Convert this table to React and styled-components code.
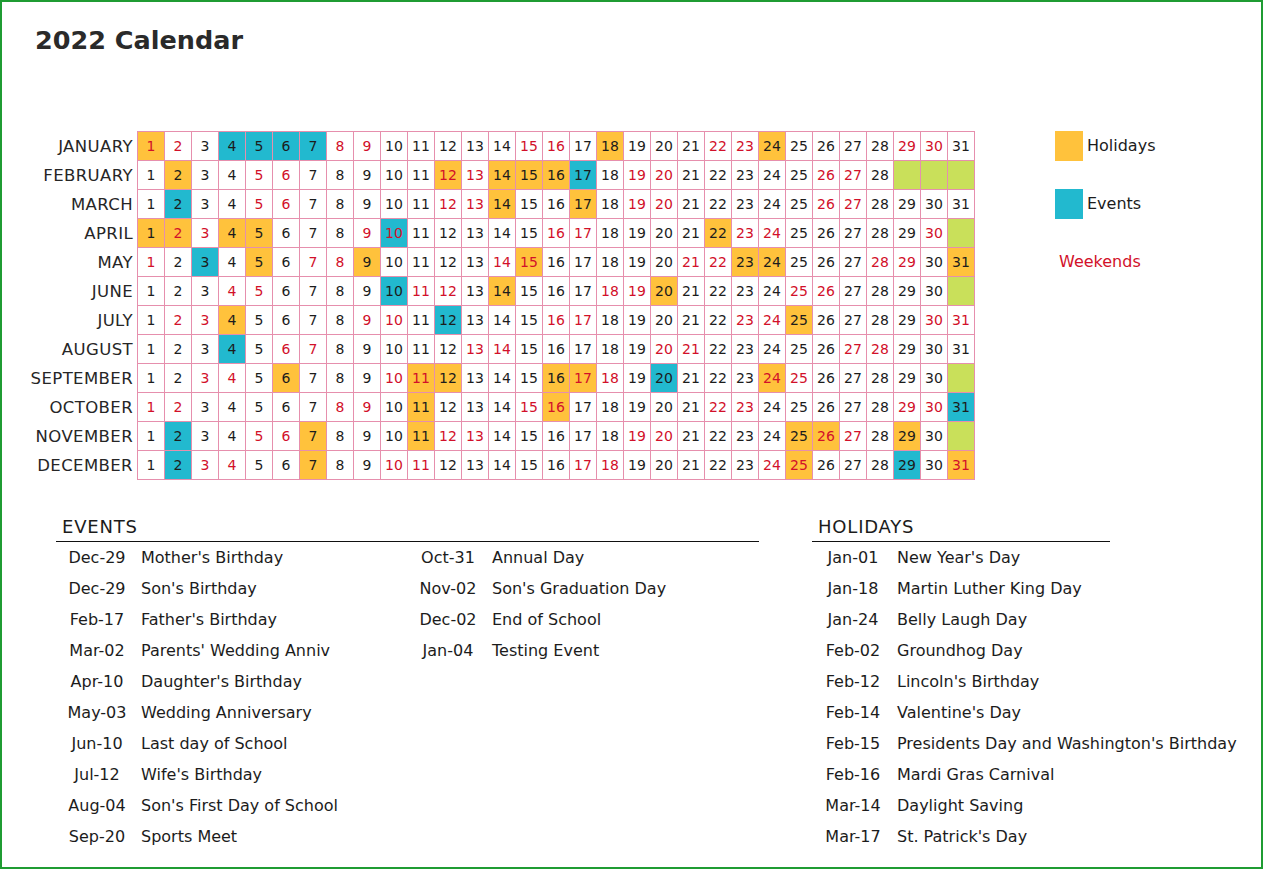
import styled, { createGlobalStyle } from "styled-components";

const GlobalStyle = createGlobalStyle`
  html, body {
    margin: 0;
    padding: 0;
    background: #ffffff;
    overflow: hidden;
  }
  body {
    font-family: "DejaVu Sans", "Liberation Sans", sans-serif;
    color: #1c1c1c;
  }
`;

const YEAR = 2022;

const MONTHS = [
  "JANUARY",
  "FEBRUARY",
  "MARCH",
  "APRIL",
  "MAY",
  "JUNE",
  "JULY",
  "AUGUST",
  "SEPTEMBER",
  "OCTOBER",
  "NOVEMBER",
  "DECEMBER",
];

const HOLIDAY_DAYS = [
  [1, 18, 24],
  [2, 12, 14, 15, 16],
  [14, 17],
  [1, 2, 4, 5, 22],
  [5, 9, 15, 23, 24, 31],
  [14, 20],
  [4, 25],
  [],
  [6, 11, 12, 16, 17, 24],
  [11, 16],
  [7, 11, 25, 26, 29],
  [7, 25, 31],
];

const EVENT_DAYS = [
  [4, 5, 6, 7],
  [17],
  [2],
  [10],
  [3],
  [10],
  [12],
  [4],
  [20],
  [31],
  [2],
  [2, 29],
];

const EVENTS_LEFT = [
  ["Dec-29", "Mother's Birthday"],
  ["Dec-29", "Son's Birthday"],
  ["Feb-17", "Father's Birthday"],
  ["Mar-02", "Parents' Wedding Anniv"],
  ["Apr-10", "Daughter's Birthday"],
  ["May-03", "Wedding Anniversary"],
  ["Jun-10", "Last day of School"],
  ["Jul-12", "Wife's Birthday"],
  ["Aug-04", "Son's First Day of School"],
  ["Sep-20", "Sports Meet"],
];

const EVENTS_RIGHT = [
  ["Oct-31", "Annual Day"],
  ["Nov-02", "Son's Graduation Day"],
  ["Dec-02", "End of School"],
  ["Jan-04", "Testing Event"],
];

const HOLIDAYS = [
  ["Jan-01", "New Year's Day"],
  ["Jan-18", "Martin Luther King Day"],
  ["Jan-24", "Belly Laugh Day"],
  ["Feb-02", "Groundhog Day"],
  ["Feb-12", "Lincoln's Birthday"],
  ["Feb-14", "Valentine's Day"],
  ["Feb-15", "Presidents Day and Washington's Birthday"],
  ["Feb-16", "Mardi Gras Carnival"],
  ["Mar-14", "Daylight Saving"],
  ["Mar-17", "St. Patrick's Day"],
];

const FILLS = {
  holiday: "#ffc23c",
  event: "#22b9cf",
  blank: "#c9e05a",
  none: "#ffffff",
};

function cellInfo(month, day) {
  const daysInMonth = new Date(YEAR, month + 1, 0).getDate();
  if (day > daysInMonth) return { fill: "blank", label: "", weekend: false };
  const weekday = new Date(YEAR, month, day).getDay();
  let fill = "none";
  if (HOLIDAY_DAYS[month].includes(day)) fill = "holiday";
  if (EVENT_DAYS[month].includes(day)) fill = "event";
  return { fill, label: day, weekend: weekday === 0 || weekday === 6 };
}

export default function App() {
  const days = Array.from({ length: 31 }, (_, i) => i + 1);

  return (
    <Frame>
      <GlobalStyle />
      <Title>2022 Calendar</Title>

      <CalendarRow>
        <MonthLabels>
          {MONTHS.map((name) => (
            <MonthLabel key={name}>{name}</MonthLabel>
          ))}
        </MonthLabels>

        <DayGrid>
          {MONTHS.map((name, m) =>
            days.map((d) => {
              const info = cellInfo(m, d);
              return (
                <DayCell
                  key={`${name}-${d}`}
                  $fill={FILLS[info.fill]}
                  $weekend={info.weekend}
                >
                  {info.label}
                </DayCell>
              );
            })
          )}
        </DayGrid>

        <Legend>
          <LegendItem>
            <Swatch $color={FILLS.holiday} />
            <span>Holidays</span>
          </LegendItem>
          <LegendItem>
            <Swatch $color={FILLS.event} />
            <span>Events</span>
          </LegendItem>
          <LegendItem>
            <WeekendNote>Weekends</WeekendNote>
          </LegendItem>
        </Legend>
      </CalendarRow>

      <Lists>
        <EventsSection>
          <SectionHeading>EVENTS</SectionHeading>
          <Columns>
            <div>
              {EVENTS_LEFT.map(([date, name], i) => (
                <ListRow key={i}>
                  <DateCell>{date}</DateCell>
                  <NameCell>{name}</NameCell>
                </ListRow>
              ))}
            </div>
            <div>
              {EVENTS_RIGHT.map(([date, name], i) => (
                <ListRow key={i}>
                  <DateCell>{date}</DateCell>
                  <NameCell>{name}</NameCell>
                </ListRow>
              ))}
            </div>
          </Columns>
        </EventsSection>

        <HolidaysSection>
          <SectionHeading>HOLIDAYS</SectionHeading>
          {HOLIDAYS.map(([date, name], i) => (
            <ListRow key={i}>
              <DateCell>{date}</DateCell>
              <NameCell>{name}</NameCell>
            </ListRow>
          ))}
        </HolidaysSection>
      </Lists>
    </Frame>
  );
}

const Frame = styled.div`
  box-sizing: border-box;
  width: 1263px;
  height: 869px;
  border: 2px solid #1f9c33;
  overflow: hidden;
`;

const Title = styled.h1`
  margin: 26px 0 0 33px;
  font-size: 25.5px;
  line-height: 1;
  font-weight: bold;
  color: #2a2a2a;
`;

const CalendarRow = styled.div`
  display: flex;
  align-items: flex-start;
  margin-top: 77px;
`;

const MonthLabels = styled.div`
  display: flex;
  flex-direction: column;
  width: 135px;
  padding-top: 1px;
`;

const MonthLabel = styled.div`
  height: 29px;
  line-height: 29px;
  padding-right: 4px;
  text-align: right;
  font-size: 16.5px;
  letter-spacing: 0.4px;
  color: #262626;
  white-space: nowrap;
`;

const DayGrid = styled.div`
  display: grid;
  grid-template-columns: repeat(31, 27px);
  grid-auto-rows: 29px;
  border-top: 1px solid #e68fad;
  border-left: 1px solid #e68fad;
`;

const DayCell = styled.div`
  box-sizing: border-box;
  display: flex;
  align-items: center;
  justify-content: center;
  border-right: 1px solid #e68fad;
  border-bottom: 1px solid #e68fad;
  background: ${(props) => props.$fill};
  color: ${(props) => (props.$weekend ? "#d2102a" : "#1c1c1c")};
  font-size: 14px;
`;

const Legend = styled.div`
  display: flex;
  flex-direction: column;
  gap: 28px;
  margin-left: 80px;
`;

const LegendItem = styled.div`
  display: flex;
  align-items: center;
  gap: 4px;
  height: 30px;
  font-size: 16px;
  color: #1c1c1c;
`;

const Swatch = styled.span`
  width: 28px;
  height: 30px;
  background: ${(props) => props.$color};
`;

const WeekendNote = styled.span`
  padding-left: 4px;
  color: #d2102a;
`;

const Lists = styled.div`
  display: flex;
  align-items: flex-start;
  margin-top: 38px;
  padding-left: 54px;
`;

const EventsSection = styled.section`
  flex-shrink: 0;
  width: 703px;
`;

const HolidaysSection = styled.section`
  flex-shrink: 0;
  width: 298px;
  margin-left: 53px;
`;

const SectionHeading = styled.h2`
  margin: 0;
  padding: 0 0 5px 6px;
  border-bottom: 1px solid #111111;
  font-size: 18px;
  line-height: 1;
  font-weight: normal;
  letter-spacing: 0.8px;
  color: #1c1c1c;
`;

const Columns = styled.div`
  display: grid;
  grid-template-columns: 351px 352px;
`;

const ListRow = styled.div`
  display: flex;
  height: 31px;
  line-height: 31px;
  font-size: 16px;
  white-space: nowrap;
`;

const DateCell = styled.span`
  flex-shrink: 0;
  width: 82px;
  text-align: center;
`;

const NameCell = styled.span`
  flex-shrink: 0;
  padding-left: 3px;
`;
